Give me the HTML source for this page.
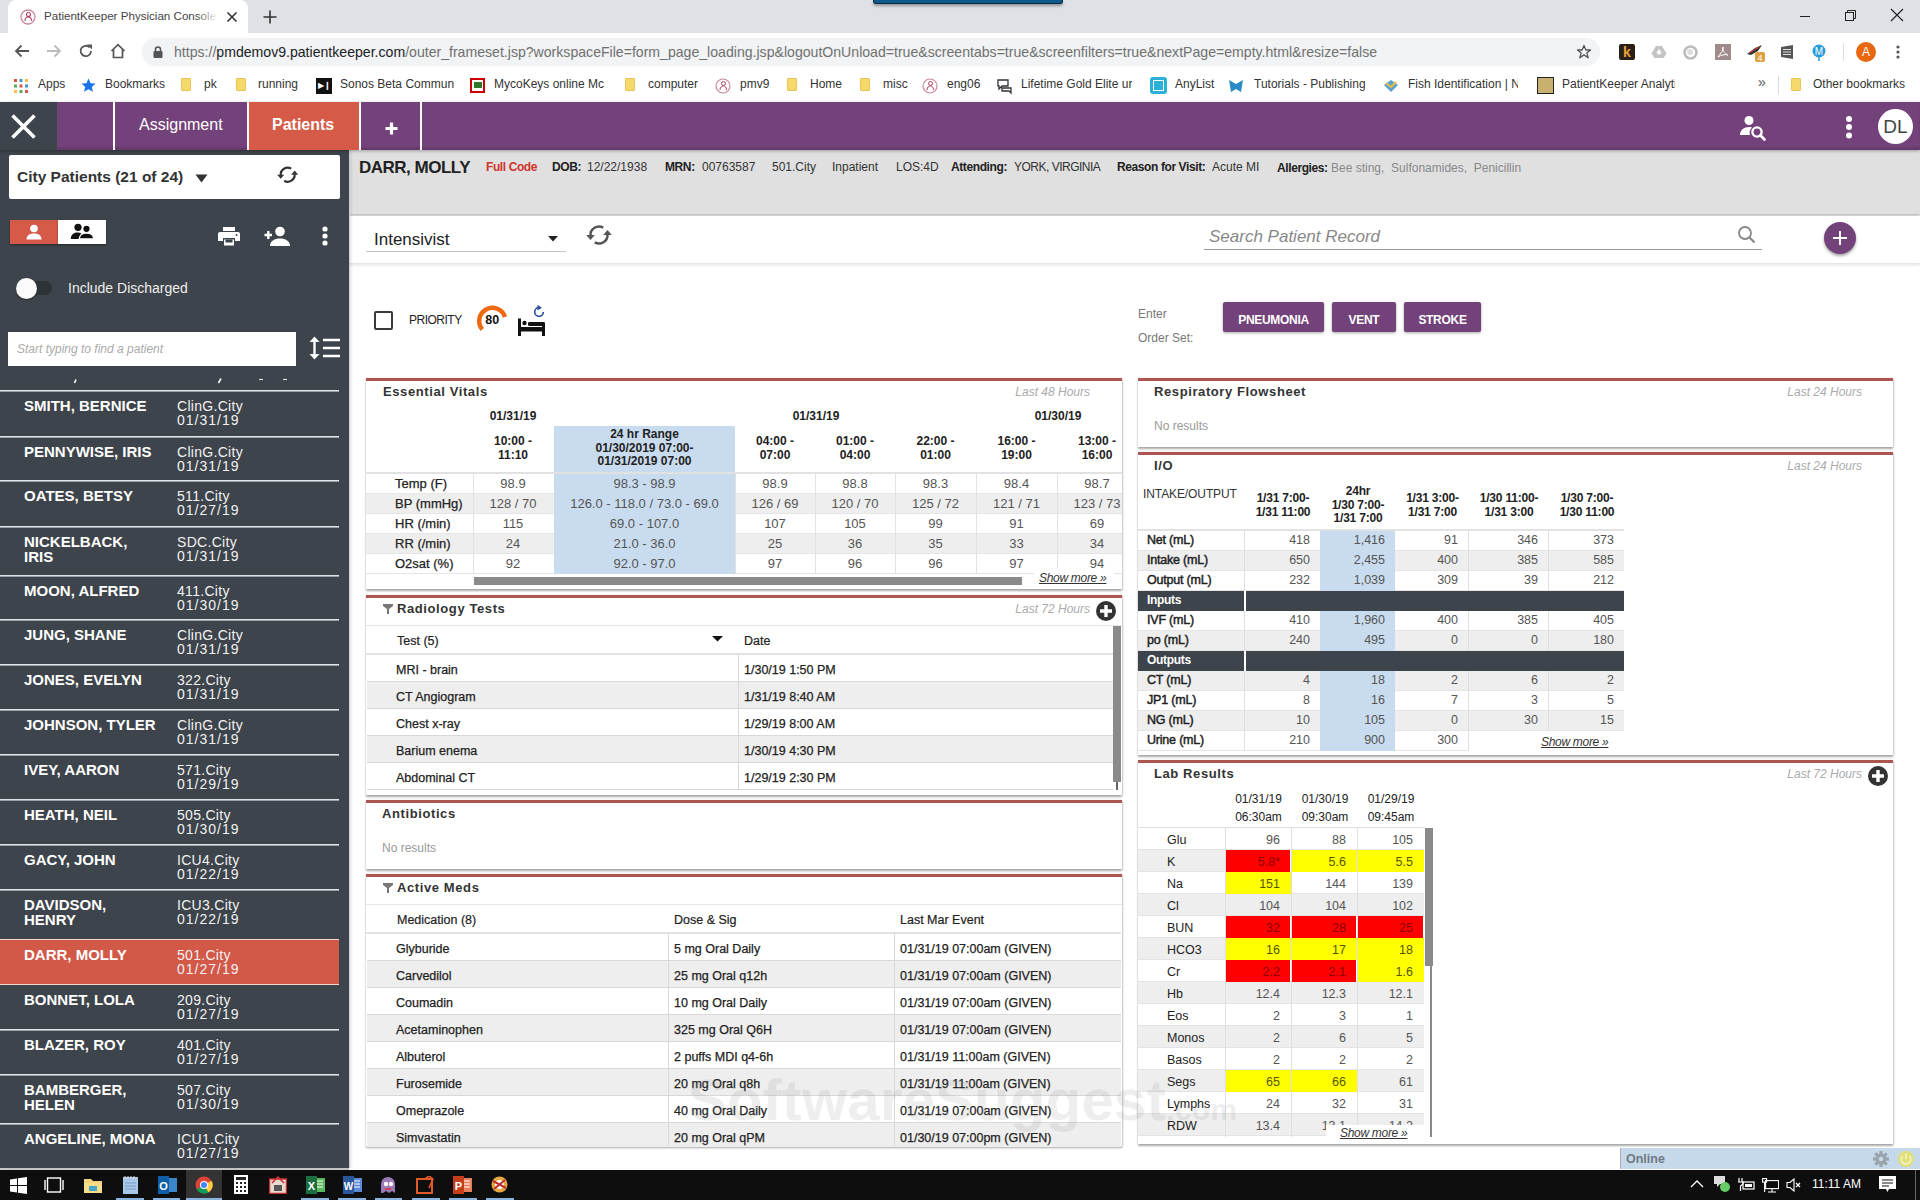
<!DOCTYPE html>
<html><head><meta charset="utf-8">
<style>
*{box-sizing:border-box;margin:0;padding:0}
html,body{width:1920px;height:1200px;overflow:hidden;background:#fff;font-family:"Liberation Sans",sans-serif;color:#222}
.a{position:absolute}
#tabbar{left:0;top:0;width:1920px;height:33px;background:#dee1e6}
#tab{left:8px;top:0;width:240px;height:33px;background:#fff;border-radius:8px 8px 0 0}
#addr{left:0;top:33px;width:1920px;height:35px;background:#fff}
#omni{left:142px;top:38px;width:1458px;height:28px;background:#f1f3f4;border-radius:14px}
#bm{left:0;top:68px;width:1920px;height:34px;background:#fff;font-size:12px;color:#333}
.bmt{top:9px;white-space:nowrap}
.fold{width:10px;height:13px;background:#f6d96b;border:1px solid #e5c55a;border-radius:1px;top:10px}
#hdr{left:0;top:102px;width:1920px;height:48px;background:#74427a;box-shadow:inset 0 -3px 2px rgba(0,0,0,.12),0 1px 3px rgba(0,0,0,.3);z-index:2}
#side{left:0;top:150px;width:349px;height:1018px;background:#3d444b;box-shadow:1px 0 0 #c9d0d6,3px 0 2px rgba(0,0,0,.08);z-index:1}
#phdr{left:349px;top:150px;width:1571px;height:64px;background:#e0e0e0;box-shadow:0 2px 2px rgba(0,0,0,.25)}
#tool{left:349px;top:216px;width:1571px;height:47px;background:#fff;box-shadow:0 2px 3px rgba(0,0,0,.12)}
#task{left:0;top:1168px;width:1920px;height:32px;background:#111214}
.nm{left:24px;font-size:15px;font-weight:bold;color:#fff;line-height:15px;white-space:nowrap}
.lc{left:177px;font-size:14px;color:#f2f2f2;line-height:14px;white-space:nowrap;letter-spacing:.3px}
.dt{letter-spacing:1px}
.sep{left:0;width:339px;height:2px;border-top:1px solid #e2e5e8;background:#9ca2a8}
.ht{top:160px;font-size:12px;color:#333;white-space:nowrap}
.b{font-weight:bold;letter-spacing:-0.4px;color:#222}
.obtn{top:302px;height:30px;padding-top:3px;background:#74427a;color:#fff;font-size:12px;font-weight:bold;text-align:center;line-height:30px;border-radius:2px;box-shadow:0 1px 3px rgba(0,0,0,.35);letter-spacing:-0.3px}
.pnl{background:#fff;border-top:3px solid #ad5651;box-shadow:0 2px 2px rgba(0,0,0,.33),1px 0 2px rgba(0,0,0,.12)}
.vl{font-size:13px;color:#222;line-height:19px;white-space:nowrap;-webkit-text-stroke:0.25px #222}
.vv{font-size:13px;color:#555;line-height:19px;text-align:center;white-space:nowrap}
</style></head><body>
<div id="tabbar" class="a">
 <div class="a" style="left:873px;top:0;width:190px;height:4px;background:#0d5b8c;border:1px solid #0a2a44;border-top:0;border-radius:0 0 3px 3px;box-shadow:0 2px 3px rgba(0,0,0,.35)"></div>
 <svg class="a" style="left:1798px;top:9px" width="14" height="14"><path d="M2 7.5H12" stroke="#222" stroke-width="1"/></svg>
 <svg class="a" style="left:1843px;top:8px" width="14" height="14"><rect x="2.5" y="4.5" width="8" height="8" fill="none" stroke="#222"/><path d="M4.5 4.5V2.5H12.5V10.5H10.5" fill="none" stroke="#222"/></svg>
 <svg class="a" style="left:1889px;top:7px" width="16" height="16"><path d="M2 2L14 14M14 2L2 14" stroke="#222" stroke-width="1.2"/></svg>
 <svg class="a" style="left:262px;top:9px" width="16" height="16"><path d="M8 1.5V14.5M1.5 8H14.5" stroke="#333" stroke-width="1.6"/></svg>
</div>
<div id="tab" class="a">
 <svg class="a" style="left:12px;top:9px" width="16" height="16"><circle cx="8" cy="8" r="7" fill="#fff" stroke="#c98a98" stroke-width="1.3"/><circle cx="8.5" cy="5.5" r="2" fill="none" stroke="#b04060" stroke-width="1.1"/><path d="M5 12c0-3 2-4 3.5-4s3 1 3 4" fill="none" stroke="#b04060" stroke-width="1.1"/></svg>
 <div class="a" style="left:36px;top:9px;font-size:11.6px;color:#444;white-space:nowrap;width:173px;overflow:hidden">PatientKeeper Physician Console</div>
 <div class="a" style="left:188px;top:6px;width:22px;height:20px;background:linear-gradient(90deg,rgba(255,255,255,0),#fff)"></div>
 <svg class="a" style="left:218px;top:11px" width="12" height="12"><path d="M1.5 1.5L10.5 10.5M10.5 1.5L1.5 10.5" stroke="#333" stroke-width="1.6"/></svg>
</div>
<div id="addr" class="a">
 <svg class="a" style="left:13px;top:10px" width="18" height="16"><path d="M16 8H3M8.5 2.5L3 8L8.5 13.5" fill="none" stroke="#555" stroke-width="1.8"/></svg>
 <svg class="a" style="left:45px;top:10px" width="18" height="16"><path d="M2 8H15M9.5 2.5L15 8L9.5 13.5" fill="none" stroke="#bbb" stroke-width="1.8"/></svg>
 <svg class="a" style="left:78px;top:10px" width="16" height="16"><path d="M13 8A5.2 5.2 0 1 1 11.5 4.3" fill="none" stroke="#555" stroke-width="1.8"/><path d="M9 1.5H14V6.5Z" fill="#555"/></svg>
 <svg class="a" style="left:109px;top:9px" width="18" height="18"><path d="M2.5 9L9 2.7L15.5 9M4.5 7.5V15.5H13.5V7.5" fill="none" stroke="#555" stroke-width="1.7"/></svg>
</div>
<div id="omni" class="a">
 <svg class="a" style="left:10px;top:7px" width="12" height="14"><rect x="1.5" y="6" width="9" height="7" rx="1" fill="#555"/><path d="M3.5 6V4.5a2.5 2.5 0 0 1 5 0V6" fill="none" stroke="#555" stroke-width="1.6"/></svg>
 <div class="a" style="left:32px;top:6px;font-size:14.1px;color:#707070;white-space:nowrap;letter-spacing:0">https://<span style="color:#202124">pmdemov9.patientkeeper.com</span>/outer_frameset.jsp?workspaceFile=form_page_loading.jsp&amp;logoutOnUnload=true&amp;screentabs=true&amp;screenfilters=true&amp;nextPage=empty.html&amp;resize=false</div>
 <svg class="a" style="left:1434px;top:6px" width="16" height="16"><path d="M8 1.5L9.9 6H14.5L10.8 8.9L12.2 13.8L8 10.9L3.8 13.8L5.2 8.9L1.5 6H6.1Z" fill="none" stroke="#555" stroke-width="1.3" stroke-linejoin="round"/></svg>
</div>
<div class="a" style="left:1619px;top:44px;width:16px;height:16px;background:#2b2018;border-radius:2px;color:#e8a23a;font:bold 14px 'Liberation Sans';text-align:center;line-height:16px">k</div>
<svg class="a" style="left:1651px;top:45px" width="16" height="14"><path d="M5 1H11L15.5 8.5L12.5 13H3.5L0.5 8.5Z" fill="#c4c4c4"/><path d="M5.5 7.5L8 4L10.5 7.5L9 9.5H7Z" fill="#fff"/></svg>
<svg class="a" style="left:1683px;top:45px" width="15" height="15"><circle cx="7.5" cy="7.5" r="6" fill="none" stroke="#bbb" stroke-width="2.5"/><circle cx="7" cy="7" r="3" fill="#ddd"/></svg>
<div class="a" style="left:1715px;top:44px;width:16px;height:16px;background:#a08b8b"><svg width="16" height="16"><path d="M3 13C6 9 9 5 8 3C7 5 9 10 13 11C10 10 6 11 3 13Z" fill="none" stroke="#fff" stroke-width="1"/></svg></div>
<svg class="a" style="left:1745px;top:42px" width="22" height="22"><path d="M2 12L10 6L17 3L13 9L6 13Z" fill="#333"/><path d="M4 11L14 5" stroke="#e33" stroke-width="1"/><rect x="10" y="10" width="10" height="10" rx="2" fill="#e0a040"/><text x="15" y="18.5" font-size="9" fill="#fff" text-anchor="middle" font-family="Liberation Sans">4</text></svg>
<svg class="a" style="left:1779px;top:44px" width="16" height="16"><path d="M2 3L14 1V15L2 13Z" fill="#555"/><path d="M4 5.5H12M4 8H12M4 10.5H12" stroke="#ddd" stroke-width="1.2"/></svg>
<svg class="a" style="left:1811px;top:44px" width="16" height="18"><circle cx="8" cy="7" r="6.5" fill="#2a9ad8"/><text x="8" y="11" font-size="10" fill="#fff" text-anchor="middle" font-family="Liberation Sans">M</text><path d="M8 13V17" stroke="#2a9ad8" stroke-width="1.5"/></svg>
<div class="a" style="left:1843px;top:43px;width:1px;height:18px;background:#ddd"></div>
<div class="a" style="left:1856px;top:42px;width:20px;height:20px;border-radius:50%;background:#e8670f;color:#fff;font-size:12px;text-align:center;line-height:20px">A</div>
<svg class="a" style="left:1894px;top:44px" width="8" height="16"><circle cx="4" cy="3" r="1.6" fill="#555"/><circle cx="4" cy="8" r="1.6" fill="#555"/><circle cx="4" cy="13" r="1.6" fill="#555"/></svg>
<div id="bm" class="a">
 <svg class="a" style="left:14px;top:11px" width="14" height="14"><g><rect x="0" y="0" width="3" height="3" fill="#d54"/><rect x="5.5" y="0" width="3" height="3" fill="#49c"/><rect x="11" y="0" width="3" height="3" fill="#fb4"/><rect x="0" y="5.5" width="3" height="3" fill="#5a5"/><rect x="5.5" y="5.5" width="3" height="3" fill="#d54"/><rect x="11" y="5.5" width="3" height="3" fill="#49c"/><rect x="0" y="11" width="3" height="3" fill="#fb4"/><rect x="5.5" y="11" width="3" height="3" fill="#5a5"/><rect x="11" y="11" width="3" height="3" fill="#d54"/></g></svg>
 <div class="a bmt" style="left:38px">Apps</div>
 <svg class="a" style="left:81px;top:10px" width="15" height="15"><path d="M7.5 0.5L9.6 5.2L14.5 5.6L10.8 8.9L12 13.8L7.5 11.2L3 13.8L4.2 8.9L0.5 5.6L5.4 5.2Z" fill="#1a73e8"/></svg>
 <div class="a bmt" style="left:105px">Bookmarks</div>
 <div class="a fold" style="left:181px"></div><div class="a bmt" style="left:204px">pk</div>
 <div class="a fold" style="left:236px"></div><div class="a bmt" style="left:258px">running</div>
 <div class="a" style="left:316px;top:10px;width:16px;height:16px;background:#111;color:#fff;font-size:8px;line-height:16px;text-align:center">&#9654;&#10073;</div>
 <div class="a bmt" style="left:340px;width:114px;overflow:hidden">Sonos Beta Communi</div>
 <div class="a" style="left:470px;top:10px;width:15px;height:15px;border:2px solid #c00;background:#fff"><div style="width:8px;height:6px;background:#2a7a2a;margin:2px"></div></div>
 <div class="a bmt" style="left:494px;width:111px;overflow:hidden">MycoKeys online Mc</div>
 <div class="a fold" style="left:625px"></div><div class="a bmt" style="left:648px">computer</div>
 <svg class="a" style="left:715px;top:10px" width="16" height="16"><circle cx="8" cy="8" r="7" fill="#fff" stroke="#c98a98" stroke-width="1.2"/><circle cx="8.5" cy="5.5" r="2" fill="none" stroke="#b04060"/><path d="M5 12c0-3 2-4 3.5-4s3 1 3 4" fill="none" stroke="#b04060"/></svg>
 <div class="a bmt" style="left:740px">pmv9</div>
 <div class="a fold" style="left:787px"></div><div class="a bmt" style="left:810px">Home</div>
 <div class="a fold" style="left:860px"></div><div class="a bmt" style="left:883px">misc</div>
 <svg class="a" style="left:922px;top:10px" width="16" height="16"><circle cx="8" cy="8" r="7" fill="#fff" stroke="#c98a98" stroke-width="1.2"/><circle cx="8.5" cy="5.5" r="2" fill="none" stroke="#b04060"/><path d="M5 12c0-3 2-4 3.5-4s3 1 3 4" fill="none" stroke="#b04060"/></svg>
 <div class="a bmt" style="left:947px">eng06</div>
 <svg class="a" style="left:996px;top:9px" width="18" height="18"><path d="M2 3H12V9H6L3 12V9H2Z M6 11H15V16L13 14H6Z" fill="none" stroke="#333" stroke-width="1.3"/></svg>
 <div class="a bmt" style="left:1021px;width:111px;overflow:hidden">Lifetime Gold Elite ur</div>
 <div class="a" style="left:1150px;top:9px;width:17px;height:17px;background:#2bb0d8;border-radius:3px"><div style="margin:3px;width:11px;height:11px;border:1.5px solid #fff"></div></div>
 <div class="a bmt" style="left:1175px">AnyList</div>
 <svg class="a" style="left:1228px;top:10px" width="16" height="16"><path d="M1 2L8 6L15 2L13 14L8 11L3 14Z" fill="#2a8ac8"/></svg>
 <div class="a bmt" style="left:1254px;width:111px;overflow:hidden">Tutorials - Publishing</div>
 <svg class="a" style="left:1382px;top:9px" width="18" height="18"><path d="M2 8L9 3L16 8L9 15Z" fill="#5ba0d0"/><path d="M4 6L9 10L14 5" stroke="#e8c040" stroke-width="2" fill="none"/></svg>
 <div class="a bmt" style="left:1408px;width:110px;overflow:hidden">Fish Identification | N</div>
 <div class="a" style="left:1537px;top:9px;width:17px;height:17px;border:1px solid #222;background:#c8b070"></div>
 <div class="a bmt" style="left:1562px;width:113px;overflow:hidden">PatientKeeper Analyti</div>
 <div class="a bmt" style="left:1758px;font-size:14px;top:6px;color:#555">&#187;</div>
 <div class="a" style="left:1778px;top:8px;width:1px;height:18px;background:#ddd"></div>
 <div class="a fold" style="left:1791px"></div><div class="a bmt" style="left:1813px">Other bookmarks</div>
</div>
<div id="hdr" class="a">
 <div class="a" style="left:0;top:0;width:57px;height:48px;background:#3d444b"></div>
 <svg class="a" style="left:10px;top:11px" width="27" height="27"><path d="M2.5 2.5L24.5 24.5M24.5 2.5L2.5 24.5" stroke="#fff" stroke-width="3.6"/></svg>
 <div class="a" style="left:113px;top:0;width:2px;height:48px;background:#fff"></div>
 <div class="a" style="left:139px;top:14px;font-size:16px;color:#fff">Assignment</div>
 <div class="a" style="left:247px;top:0;width:2px;height:48px;background:#fff"></div>
 <div class="a" style="left:249px;top:0;width:110px;height:48px;background:#d65a48"></div>
 <div class="a" style="left:272px;top:14px;font-size:16px;font-weight:bold;color:#fff">Patients</div>
 <div class="a" style="left:359px;top:0;width:2px;height:48px;background:#fff"></div>
 <svg class="a" style="left:384px;top:19px" width="15" height="15"><path d="M7.5 1.5V13.5M1.5 7.5H13.5" stroke="#fff" stroke-width="3.2"/></svg>
 <div class="a" style="left:420px;top:0;width:2px;height:48px;background:#fff"></div>
 <svg class="a" style="left:1738px;top:11px" width="30" height="30"><circle cx="11" cy="7.5" r="4.5" fill="#fff"/><path d="M2 22c0-5 4-8 9-8c1 0 2 .1 3 .4A7 7 0 0 0 12 22Z" fill="#fff"/><circle cx="19" cy="19" r="4.6" fill="none" stroke="#fff" stroke-width="2.4"/><path d="M22.3 22.3L26.5 26.5" stroke="#fff" stroke-width="2.8" stroke-linecap="round"/></svg>
 <svg class="a" style="left:1842px;top:12px" width="14" height="28"><circle cx="7" cy="5" r="3" fill="#fff"/><circle cx="7" cy="13" r="3" fill="#fff"/><circle cx="7" cy="21.5" r="3" fill="#fff"/></svg>
 <div class="a" style="left:1878px;top:7px;width:35px;height:35px;border-radius:50%;background:#fff;color:#444;font-size:19px;text-align:center;line-height:35px">DL</div>
</div>
<div id="side" class="a">
 <div class="a" style="left:9px;top:5px;width:331px;height:44px;background:#fff;border-radius:2px"></div>
 <div class="a" style="left:17px;top:18px;font-size:15.5px;font-weight:bold;color:#333;white-space:nowrap">City Patients (21 of 24)</div>
 <svg class="a" style="left:195px;top:24px" width="13" height="9"><path d="M0.5 0.5H12.5L6.5 8.5Z" fill="#333"/></svg>
 <svg class="a" style="left:277px;top:14px" width="21.4" height="21.4" viewBox="-1 -1 26 26"><path d="M16.25 4.64A8.5 8.5 0 0 0 3.5 12.5M7.75 19.36A8.5 8.5 0 0 0 20.5 11.5" fill="none" stroke="#333" stroke-width="2.7"/><path d="M-0.8 12H7.8L3.5 17Z M16.2 12H24.8L20.5 7Z" fill="#333"/></svg>
 <div class="a" style="left:10px;top:70px;width:48px;height:24px;background:#d65a48;box-shadow:0 1px 2px rgba(0,0,0,.4)"></div>
 <div class="a" style="left:58px;top:70px;width:48px;height:24px;background:#fff;box-shadow:0 1px 2px rgba(0,0,0,.4)"></div>
 <svg class="a" style="left:25px;top:74px" width="18" height="16"><circle cx="9" cy="4.5" r="3.8" fill="#fff"/><path d="M1.5 15.5c0-4 3-6 7.5-6s7.5 2 7.5 6Z" fill="#fff"/></svg>
 <svg class="a" style="left:70px;top:73px" width="25" height="17"><circle cx="8" cy="4.3" r="3.6" fill="#111"/><circle cx="16.5" cy="5.8" r="3.1" fill="#111"/><path d="M0.8 16c0-4 2.5-6.5 6.5-6.5c1.5 0 3 .4 4 1L8.5 16Z" fill="#111"/><path d="M9.3 16c0-3.6 2.8-6 7.2-6s7.2 2.4 7.2 6Z" fill="#111" stroke="#fff" stroke-width="1.3"/></svg>
 <svg class="a" style="left:218px;top:77px" width="22" height="19"><rect x="5" y="0" width="12" height="4" fill="#fff"/><path d="M0 7a2 2 0 0 1 2-2H20a2 2 0 0 1 2 2V14H17V11H5V14H0Z" fill="#fff"/><rect x="6" y="12.5" width="10" height="6" fill="#fff"/><rect x="7.5" y="12.5" width="7" height="3" fill="#3d444b"/><circle cx="18.5" cy="8" r="1" fill="#3d444b"/></svg>
 <svg class="a" style="left:264px;top:76px" width="27" height="20"><path d="M0.5 9H8M4.3 5V13" stroke="#fff" stroke-width="2.4"/><circle cx="16" cy="5.5" r="4.8" fill="#fff"/><path d="M6 20c0-5 4.5-7.5 10-7.5s10 2.5 10 7.5Z" fill="#fff"/></svg>
 <svg class="a" style="left:319px;top:76px" width="12" height="20"><circle cx="6" cy="3" r="2.6" fill="#fff"/><circle cx="6" cy="10" r="2.6" fill="#fff"/><circle cx="6" cy="17" r="2.6" fill="#fff"/></svg>
 <div class="a" style="left:16px;top:131px;width:36px;height:14px;border-radius:7px;background:#2e3338"></div>
 <div class="a" style="left:16px;top:128px;width:21px;height:21px;border-radius:50%;background:#fafafa;box-shadow:0 1px 2px rgba(0,0,0,.4)"></div>
 <div class="a" style="left:68px;top:130px;font-size:14px;color:#eee">Include Discharged</div>
 <div class="a" style="left:8px;top:182px;width:288px;height:34px;background:#fff"></div>
 <div class="a" style="left:17px;top:192px;font-size:12px;font-style:italic;color:#aaa">Start typing to find a patient</div>
 <svg class="a" style="left:309px;top:186px" width="32" height="24"><path d="M5.5 2V22" stroke="#fff" stroke-width="2.4"/><path d="M0.5 6L5.5 0.5L10.5 6Z M0.5 18L5.5 23.5L10.5 18Z" fill="#fff"/><path d="M14 4H31M14 12H31M14 20H31" stroke="#fff" stroke-width="2.6"/></svg>
 <div class="a sep" style="top:240px"></div>
 <div class="a nm" style="margin-top:-1px;top:249px">SMITH, BERNICE</div><div class="a lc" style="margin-top:-1px;top:250px">ClinG.City<br><span class="dt">01/31/19</span></div>
 <div class="a sep" style="top:286px"></div>
 <div class="a nm" style="margin-top:-1px;top:295px">PENNYWISE, IRIS</div><div class="a lc" style="margin-top:-1px;top:296px">ClinG.City<br><span class="dt">01/31/19</span></div>
 <div class="a sep" style="top:330px"></div>
 <div class="a nm" style="margin-top:-1px;top:339px">OATES, BETSY</div><div class="a lc" style="margin-top:-1px;top:340px">511.City<br><span class="dt">01/27/19</span></div>
 <div class="a sep" style="top:376px"></div>
 <div class="a nm" style="margin-top:-1px;top:385px">NICKELBACK,<br>IRIS</div><div class="a lc" style="margin-top:-1px;top:386px">SDC.City<br><span class="dt">01/31/19</span></div>
 <div class="a sep" style="top:425px"></div>
 <div class="a nm" style="margin-top:-1px;top:434px">MOON, ALFRED</div><div class="a lc" style="margin-top:-1px;top:435px">411.City<br><span class="dt">01/30/19</span></div>
 <div class="a sep" style="top:469px"></div>
 <div class="a nm" style="margin-top:-1px;top:478px">JUNG, SHANE</div><div class="a lc" style="margin-top:-1px;top:479px">ClinG.City<br><span class="dt">01/31/19</span></div>
 <div class="a sep" style="top:514px"></div>
 <div class="a nm" style="margin-top:-1px;top:523px">JONES, EVELYN</div><div class="a lc" style="margin-top:-1px;top:524px">322.City<br><span class="dt">01/31/19</span></div>
 <div class="a sep" style="top:559px"></div>
 <div class="a nm" style="margin-top:-1px;top:568px">JOHNSON, TYLER</div><div class="a lc" style="margin-top:-1px;top:569px">ClinG.City<br><span class="dt">01/31/19</span></div>
 <div class="a sep" style="top:604px"></div>
 <div class="a nm" style="margin-top:-1px;top:613px">IVEY, AARON</div><div class="a lc" style="margin-top:-1px;top:614px">571.City<br><span class="dt">01/29/19</span></div>
 <div class="a sep" style="top:649px"></div>
 <div class="a nm" style="margin-top:-1px;top:658px">HEATH, NEIL</div><div class="a lc" style="margin-top:-1px;top:659px">505.City<br><span class="dt">01/30/19</span></div>
 <div class="a sep" style="top:694px"></div>
 <div class="a nm" style="margin-top:-1px;top:703px">GACY, JOHN</div><div class="a lc" style="margin-top:-1px;top:704px">ICU4.City<br><span class="dt">01/22/19</span></div>
 <div class="a sep" style="top:739px"></div>
 <div class="a nm" style="margin-top:-1px;top:748px">DAVIDSON,<br>HENRY</div><div class="a lc" style="margin-top:-1px;top:749px">ICU3.City<br><span class="dt">01/22/19</span></div>
 <div class="a" style="left:0;top:789px;width:339px;height:46px;background:#d25848;border-top:1px solid #f3d6d0;border-bottom:1px solid #f3d6d0"></div>
 <div class="a nm" style="margin-top:-1px;top:798px">DARR, MOLLY</div><div class="a lc" style="margin-top:-1px;top:799px">501.City<br><span class="dt">01/27/19</span></div>
 <div class="a nm" style="margin-top:-1px;top:843px">BONNET, LOLA</div><div class="a lc" style="margin-top:-1px;top:844px">209.City<br><span class="dt">01/27/19</span></div>
 <div class="a sep" style="top:879px"></div>
 <div class="a nm" style="margin-top:-1px;top:888px">BLAZER, ROY</div><div class="a lc" style="margin-top:-1px;top:889px">401.City<br><span class="dt">01/27/19</span></div>
 <div class="a sep" style="top:924px"></div>
 <div class="a nm" style="margin-top:-1px;top:933px">BAMBERGER,<br>HELEN</div><div class="a lc" style="margin-top:-1px;top:934px">507.City<br><span class="dt">01/30/19</span></div>
 <div class="a sep" style="top:973px"></div>
 <div class="a nm" style="margin-top:-1px;top:982px">ANGELINE, MONA</div><div class="a lc" style="margin-top:-1px;top:983px">ICU1.City<br><span class="dt">01/27/19</span></div>
</div>
<div id="phdr" class="a"></div>
<div class="a" style="left:359px;top:158px;font-size:17px;font-weight:bold;color:#222;letter-spacing:-0.5px;white-space:nowrap">DARR, MOLLY</div>
<div class="a ht" style="left:486px;color:#d0342c;font-weight:bold;letter-spacing:-0.4px">Full Code</div>
<div class="a ht b" style="left:552px">DOB:</div><div class="a ht" style="left:587px">12/22/1938</div>
<div class="a ht b" style="left:665px">MRN:</div><div class="a ht" style="left:702px">00763587</div>
<div class="a ht" style="left:772px">501.City</div>
<div class="a ht" style="left:832px">Inpatient</div>
<div class="a ht" style="left:896px">LOS:4D</div>
<div class="a ht b" style="left:951px">Attending:</div><div class="a ht" style="left:1014px;letter-spacing:-0.5px">YORK, VIRGINIA</div>
<div class="a ht b" style="left:1117px">Reason for Visit:</div><div class="a ht" style="left:1212px">Acute MI</div>
<div class="a ht b" style="left:1277px;top:161px">Allergies:</div><div class="a ht" style="left:1331px;top:161px;color:#888">Bee sting,&nbsp; Sulfonamides,&nbsp; Penicillin</div>
<div id="tool" class="a"></div>
<div class="a" style="left:374px;top:230px;font-size:17px;color:#222">Intensivist</div>
<div class="a" style="left:366px;top:251px;width:200px;height:1px;background:#c4c4c4"></div>
<svg class="a" style="left:548px;top:236px" width="11" height="6"><path d="M0 0H10L5 5.5Z" fill="#222"/></svg>
<svg class="a" style="left:586px;top:222px" width="26" height="26" viewBox="-1 -1 26 26"><path d="M16.25 4.64A8.5 8.5 0 0 0 3.5 12.5M7.75 19.36A8.5 8.5 0 0 0 20.5 11.5" fill="none" stroke="#555" stroke-width="2.5"/><path d="M-0.8 12H7.8L3.5 17Z M16.2 12H24.8L20.5 7Z" fill="#555"/></svg>
<div class="a" style="left:1209px;top:227px;font-size:17px;font-style:italic;color:#888">Search Patient Record</div>
<div class="a" style="left:1204px;top:249px;width:558px;height:1px;background:#999"></div>
<svg class="a" style="left:1737px;top:225px" width="20" height="20"><circle cx="8" cy="8" r="6" fill="none" stroke="#888" stroke-width="1.8"/><path d="M12.3 12.3L17.5 17.5" stroke="#888" stroke-width="2.2"/></svg>
<div class="a" style="left:1824px;top:222px;width:32px;height:32px;border-radius:50%;background:#74427a;box-shadow:0 2px 3px rgba(0,0,0,.35)"></div>
<svg class="a" style="left:1830px;top:228px" width="20" height="20"><path d="M10 3V17M3 10H17" stroke="#fff" stroke-width="2"/></svg>
<div class="a" style="left:374px;top:311px;width:19px;height:19px;border:2px solid #3a3a3a;border-radius:2px"></div>
<div class="a" style="left:409px;top:313px;font-size:12px;color:#222;letter-spacing:-0.5px">PRIORITY</div>
<svg class="a" style="left:475px;top:303px" width="36" height="34"><path d="M7.3 26.5A13.2 13.2 0 1 1 30 14" fill="none" stroke="#ee6a12" stroke-width="4.5"/><text x="17.3" y="21.3" font-size="12.5" font-weight="bold" fill="#111" text-anchor="middle" font-family="Liberation Sans">80</text></svg>
<svg class="a" style="left:516px;top:303px" width="32" height="34"><path d="M27.3 9A4.3 4.3 0 1 1 22.5 4.7" fill="none" stroke="#2b4f9c" stroke-width="1.7"/><path d="M21.5 1.8L26 4.7L21.5 7.6Z" fill="#2b4f9c"/><rect x="2" y="15.5" width="3" height="17.5" fill="#111"/><rect x="26" y="22" width="3" height="11" fill="#111"/><rect x="2" y="24" width="27" height="4.5" fill="#111"/><circle cx="8.5" cy="20" r="2.2" fill="#111"/><rect x="12" y="19" width="17" height="4" rx="1.2" fill="#111"/></svg>
<div class="a" style="left:1138px;top:307px;font-size:12px;color:#777">Enter</div>
<div class="a" style="left:1138px;top:331px;font-size:12px;color:#777">Order Set:</div>
<div class="a obtn" style="left:1223px;width:101px">PNEUMONIA</div>
<div class="a obtn" style="left:1332px;width:64px">VENT</div>
<div class="a obtn" style="left:1404px;width:77px">STROKE</div>

<svg class="a" style="left:70px;top:376px;z-index:3" width="230" height="10"><path d="M6 3.5L4.5 7" stroke="#fff" stroke-width="1.6"/><path d="M151 2.5L148.5 7" stroke="#fff" stroke-width="1.6"/><path d="M189 3.5H193" stroke="#ddd" stroke-width="1.2"/><path d="M213 3.5H217" stroke="#ddd" stroke-width="1.2"/></svg>
<!--PANELS-->
<div class="a pnl" style="left:366px;top:378px;width:756px;height:211px"></div>
<div class="a" style="left:383px;top:384px;font-size:13px;font-weight:bold;color:#333;letter-spacing:0.6px;white-space:nowrap">Essential Vitals</div>
<div class="a" style="left:970px;top:385px;width:120px;text-align:right;font-size:12px;font-style:italic;color:#aaa;white-space:nowrap">Last 48 Hours</div>
<div class="a" style="left:473.0px;top:410px;width:80px;text-align:center;font-size:12px;font-weight:bold;color:#222;line-height:13.6px;white-space:nowrap">01/31/19</div>
<div class="a" style="left:776.0px;top:410px;width:80px;text-align:center;font-size:12px;font-weight:bold;color:#222;line-height:13.6px;white-space:nowrap">01/31/19</div>
<div class="a" style="left:1018.0px;top:410px;width:80px;text-align:center;font-size:12px;font-weight:bold;color:#222;line-height:13.6px;white-space:nowrap">01/30/19</div>
<div class="a" style="left:554px;top:426px;width:181px;height:46px;background:#c9dcef;"></div>
<div class="a" style="left:554.0px;top:428px;width:181px;text-align:center;font-size:12px;font-weight:bold;color:#222;line-height:13.6px;white-space:nowrap">24 hr Range<br>01/30/2019 07:00-<br>01/31/2019 07:00</div>
<div class="a" style="left:473.0px;top:435px;width:80px;text-align:center;font-size:12px;font-weight:bold;color:#222;line-height:13.6px;white-space:nowrap">10:00 -<br>11:10</div>
<div class="a" style="left:735.0px;top:435px;width:80px;text-align:center;font-size:12px;font-weight:bold;color:#222;line-height:13.6px;white-space:nowrap">04:00 -<br>07:00</div>
<div class="a" style="left:815.0px;top:435px;width:80px;text-align:center;font-size:12px;font-weight:bold;color:#222;line-height:13.6px;white-space:nowrap">01:00 -<br>04:00</div>
<div class="a" style="left:895.5px;top:435px;width:80px;text-align:center;font-size:12px;font-weight:bold;color:#222;line-height:13.6px;white-space:nowrap">22:00 -<br>01:00</div>
<div class="a" style="left:976.5px;top:435px;width:80px;text-align:center;font-size:12px;font-weight:bold;color:#222;line-height:13.6px;white-space:nowrap">16:00 -<br>19:00</div>
<div class="a" style="left:1057.0px;top:435px;width:80px;text-align:center;font-size:12px;font-weight:bold;color:#222;line-height:13.6px;white-space:nowrap">13:00 -<br>16:00</div>
<div class="a" style="left:366px;top:472px;width:756px;height:2px;background:#e2e2e2;"></div>
<div class="a" style="left:366px;top:474px;width:756px;height:100px;overflow:hidden">
<div class="a" style="left:0;top:0px;width:756px;height:20px;background:#fff;border-bottom:1px solid #e6e6e6"></div>
<div class="a vl" style="left:29px;top:0px">Temp (F)</div>
<div class="a vv" style="left:107px;top:0px;width:80px">98.9</div>
<div class="a" style="left:188px;top:0px;width:181px;height:20px;background:#c9dcef"></div>
<div class="a vv" style="left:188px;top:0px;width:181px">98.3 - 98.9</div>
<div class="a vv" style="left:369px;top:0px;width:80px">98.9</div>
<div class="a vv" style="left:449px;top:0px;width:80px">98.8</div>
<div class="a vv" style="left:529px;top:0px;width:81px">98.3</div>
<div class="a vv" style="left:610px;top:0px;width:81px">98.4</div>
<div class="a vv" style="left:691px;top:0px;width:80px">98.7</div>
<div class="a" style="left:0;top:20px;width:756px;height:20px;background:#eeeeee;border-bottom:1px solid #e6e6e6"></div>
<div class="a vl" style="left:29px;top:20px">BP (mmHg)</div>
<div class="a vv" style="left:107px;top:20px;width:80px">128 / 70</div>
<div class="a" style="left:188px;top:20px;width:181px;height:20px;background:#c9dcef"></div>
<div class="a vv" style="left:188px;top:20px;width:181px">126.0 - 118.0 / 73.0 - 69.0</div>
<div class="a vv" style="left:369px;top:20px;width:80px">126 / 69</div>
<div class="a vv" style="left:449px;top:20px;width:80px">120 / 70</div>
<div class="a vv" style="left:529px;top:20px;width:81px">125 / 72</div>
<div class="a vv" style="left:610px;top:20px;width:81px">121 / 71</div>
<div class="a vv" style="left:691px;top:20px;width:80px">123 / 73</div>
<div class="a" style="left:0;top:40px;width:756px;height:20px;background:#fff;border-bottom:1px solid #e6e6e6"></div>
<div class="a vl" style="left:29px;top:40px">HR (/min)</div>
<div class="a vv" style="left:107px;top:40px;width:80px">115</div>
<div class="a" style="left:188px;top:40px;width:181px;height:20px;background:#c9dcef"></div>
<div class="a vv" style="left:188px;top:40px;width:181px">69.0 - 107.0</div>
<div class="a vv" style="left:369px;top:40px;width:80px">107</div>
<div class="a vv" style="left:449px;top:40px;width:80px">105</div>
<div class="a vv" style="left:529px;top:40px;width:81px">99</div>
<div class="a vv" style="left:610px;top:40px;width:81px">91</div>
<div class="a vv" style="left:691px;top:40px;width:80px">69</div>
<div class="a" style="left:0;top:60px;width:756px;height:20px;background:#eeeeee;border-bottom:1px solid #e6e6e6"></div>
<div class="a vl" style="left:29px;top:60px">RR (/min)</div>
<div class="a vv" style="left:107px;top:60px;width:80px">24</div>
<div class="a" style="left:188px;top:60px;width:181px;height:20px;background:#c9dcef"></div>
<div class="a vv" style="left:188px;top:60px;width:181px">21.0 - 36.0</div>
<div class="a vv" style="left:369px;top:60px;width:80px">25</div>
<div class="a vv" style="left:449px;top:60px;width:80px">36</div>
<div class="a vv" style="left:529px;top:60px;width:81px">35</div>
<div class="a vv" style="left:610px;top:60px;width:81px">33</div>
<div class="a vv" style="left:691px;top:60px;width:80px">34</div>
<div class="a" style="left:0;top:80px;width:756px;height:20px;background:#fff;border-bottom:1px solid #e6e6e6"></div>
<div class="a vl" style="left:29px;top:80px">O2sat (%)</div>
<div class="a vv" style="left:107px;top:80px;width:80px">92</div>
<div class="a" style="left:188px;top:80px;width:181px;height:20px;background:#c9dcef"></div>
<div class="a vv" style="left:188px;top:80px;width:181px">92.0 - 97.0</div>
<div class="a vv" style="left:369px;top:80px;width:80px">97</div>
<div class="a vv" style="left:449px;top:80px;width:80px">96</div>
<div class="a vv" style="left:529px;top:80px;width:81px">96</div>
<div class="a vv" style="left:610px;top:80px;width:81px">97</div>
<div class="a vv" style="left:691px;top:80px;width:80px">94</div>
<div class="a" style="left:107px;top:0;width:1px;height:100px;background:#e2e2e2"></div>
<div class="a" style="left:369px;top:0;width:1px;height:100px;background:#e2e2e2"></div>
<div class="a" style="left:449px;top:0;width:1px;height:100px;background:#e2e2e2"></div>
<div class="a" style="left:529px;top:0;width:1px;height:100px;background:#e2e2e2"></div>
<div class="a" style="left:610px;top:0;width:1px;height:100px;background:#e2e2e2"></div>
<div class="a" style="left:691px;top:0;width:1px;height:100px;background:#e2e2e2"></div>
</div>
<div class="a" style="left:474px;top:577px;width:548px;height:8px;background:#8a8a8a;"></div>
<div class="a" style="left:1034px;top:568px;width:80px;height:18px;background:#fff"></div>
<div class="a" style="left:1039px;top:571px;font-size:12px;font-style:italic;color:#333;text-decoration:underline;white-space:nowrap;letter-spacing:-0.3px">Show more &raquo;</div>
<div class="a pnl" style="left:366px;top:595px;width:756px;height:200px"></div>
<svg class="a" style="left:383px;top:604px" width="10" height="10"><path d="M0 0H10V2L6 5V10H4V5L0 2Z" fill="#777"/></svg>
<div class="a" style="left:397px;top:601px;font-size:13px;font-weight:bold;color:#333;letter-spacing:0.6px;white-space:nowrap">Radiology Tests</div>
<div class="a" style="left:970px;top:602px;width:120px;text-align:right;font-size:12px;font-style:italic;color:#aaa;white-space:nowrap">Last 72 Hours</div>
<svg class="a" style="left:1095px;top:600px" width="22" height="22"><circle cx="11" cy="11" r="10" fill="#333"/><path d="M11 5V17M5 11H17" stroke="#fff" stroke-width="3.4"/></svg>
<div class="a" style="left:366px;top:625px;width:756px;height:1px;background:#e6e6e6;"></div>
<div class="a" style="left:397px;top:634px;font-size:12.5px;color:#222;-webkit-text-stroke:0.2px #222">Test (5)</div>
<svg class="a" style="left:712px;top:636px" width="12" height="6"><path d="M0 0H11L5.5 5.5Z" fill="#111"/></svg>
<div class="a" style="left:744px;top:634px;font-size:12.5px;color:#222;-webkit-text-stroke:0.2px #222">Date</div>
<div class="a" style="left:366px;top:653px;width:747px;height:2px;background:#e2e2e2;"></div>
<div class="a" style="left:367px;top:655px;width:746px;height:27px;background:#fff;border-bottom:1px solid #d8d8d8"></div>
<div class="a" style="left:396px;top:657px;font-size:12.5px;color:#222;line-height:27px;white-space:nowrap;-webkit-text-stroke:0.25px #222">MRI - brain</div>
<div class="a" style="left:744px;top:657px;font-size:12.5px;color:#222;line-height:27px;white-space:nowrap;-webkit-text-stroke:0.25px #222">1/30/19 1:50 PM</div>
<div class="a" style="left:367px;top:682px;width:746px;height:27px;background:#eeeeee;border-bottom:1px solid #d8d8d8"></div>
<div class="a" style="left:396px;top:684px;font-size:12.5px;color:#222;line-height:27px;white-space:nowrap;-webkit-text-stroke:0.25px #222">CT Angiogram</div>
<div class="a" style="left:744px;top:684px;font-size:12.5px;color:#222;line-height:27px;white-space:nowrap;-webkit-text-stroke:0.25px #222">1/31/19 8:40 AM</div>
<div class="a" style="left:367px;top:709px;width:746px;height:27px;background:#fff;border-bottom:1px solid #d8d8d8"></div>
<div class="a" style="left:396px;top:711px;font-size:12.5px;color:#222;line-height:27px;white-space:nowrap;-webkit-text-stroke:0.25px #222">Chest x-ray</div>
<div class="a" style="left:744px;top:711px;font-size:12.5px;color:#222;line-height:27px;white-space:nowrap;-webkit-text-stroke:0.25px #222">1/29/19 8:00 AM</div>
<div class="a" style="left:367px;top:736px;width:746px;height:27px;background:#eeeeee;border-bottom:1px solid #d8d8d8"></div>
<div class="a" style="left:396px;top:738px;font-size:12.5px;color:#222;line-height:27px;white-space:nowrap;-webkit-text-stroke:0.25px #222">Barium enema</div>
<div class="a" style="left:744px;top:738px;font-size:12.5px;color:#222;line-height:27px;white-space:nowrap;-webkit-text-stroke:0.25px #222">1/30/19 4:30 PM</div>
<div class="a" style="left:367px;top:763px;width:746px;height:27px;background:#fff;border-bottom:1px solid #d8d8d8"></div>
<div class="a" style="left:396px;top:765px;font-size:12.5px;color:#222;line-height:27px;white-space:nowrap;-webkit-text-stroke:0.25px #222">Abdominal CT</div>
<div class="a" style="left:744px;top:765px;font-size:12.5px;color:#222;line-height:27px;white-space:nowrap;-webkit-text-stroke:0.25px #222">1/29/19 2:30 PM</div>
<div class="a" style="left:738px;top:655px;width:1px;height:135px;background:#d8d8d8;"></div>
<div class="a" style="left:1113px;top:626px;width:8px;height:156px;background:#8a8a8a;"></div>
<div class="a" style="left:1116px;top:782px;width:2px;height:8px;background:#666;"></div>
<div class="a pnl" style="left:366px;top:800px;width:756px;height:69px"></div>
<div class="a" style="left:382px;top:806px;font-size:13px;font-weight:bold;color:#333;letter-spacing:0.6px;white-space:nowrap">Antibiotics</div>
<div class="a" style="left:382px;top:841px;font-size:12px;color:#999">No results</div>
<div class="a pnl" style="left:366px;top:874px;width:756px;height:272px"></div>
<svg class="a" style="left:383px;top:883px" width="10" height="10"><path d="M0 0H10V2L6 5V10H4V5L0 2Z" fill="#777"/></svg>
<div class="a" style="left:397px;top:880px;font-size:13px;font-weight:bold;color:#333;letter-spacing:0.6px;white-space:nowrap">Active Meds</div>
<div class="a" style="left:366px;top:904px;width:756px;height:1px;background:#e6e6e6;"></div>
<div class="a" style="left:397px;top:913px;font-size:12.5px;color:#222;-webkit-text-stroke:0.2px #222">Medication (8)</div>
<div class="a" style="left:674px;top:913px;font-size:12.5px;color:#222;-webkit-text-stroke:0.2px #222">Dose &amp; Sig</div>
<div class="a" style="left:900px;top:913px;font-size:12.5px;color:#222;-webkit-text-stroke:0.2px #222">Last Mar Event</div>
<div class="a" style="left:366px;top:932px;width:755px;height:2px;background:#e2e2e2;"></div>
<div class="a" style="left:367px;top:934px;width:754px;height:27px;background:#fff;border-bottom:1px solid #d8d8d8"></div>
<div class="a" style="left:396px;top:936px;font-size:12.5px;color:#222;line-height:27px;white-space:nowrap;-webkit-text-stroke:0.25px #222">Glyburide</div>
<div class="a" style="left:674px;top:936px;font-size:12.5px;color:#222;line-height:27px;white-space:nowrap;-webkit-text-stroke:0.25px #222">5 mg Oral Daily</div>
<div class="a" style="left:900px;top:936px;font-size:12.5px;color:#222;line-height:27px;white-space:nowrap;-webkit-text-stroke:0.25px #222">01/31/19 07:00am (GIVEN)</div>
<div class="a" style="left:367px;top:961px;width:754px;height:27px;background:#eeeeee;border-bottom:1px solid #d8d8d8"></div>
<div class="a" style="left:396px;top:963px;font-size:12.5px;color:#222;line-height:27px;white-space:nowrap;-webkit-text-stroke:0.25px #222">Carvedilol</div>
<div class="a" style="left:674px;top:963px;font-size:12.5px;color:#222;line-height:27px;white-space:nowrap;-webkit-text-stroke:0.25px #222">25 mg Oral q12h</div>
<div class="a" style="left:900px;top:963px;font-size:12.5px;color:#222;line-height:27px;white-space:nowrap;-webkit-text-stroke:0.25px #222">01/31/19 07:00am (GIVEN)</div>
<div class="a" style="left:367px;top:988px;width:754px;height:27px;background:#fff;border-bottom:1px solid #d8d8d8"></div>
<div class="a" style="left:396px;top:990px;font-size:12.5px;color:#222;line-height:27px;white-space:nowrap;-webkit-text-stroke:0.25px #222">Coumadin</div>
<div class="a" style="left:674px;top:990px;font-size:12.5px;color:#222;line-height:27px;white-space:nowrap;-webkit-text-stroke:0.25px #222">10 mg Oral Daily</div>
<div class="a" style="left:900px;top:990px;font-size:12.5px;color:#222;line-height:27px;white-space:nowrap;-webkit-text-stroke:0.25px #222">01/31/19 07:00am (GIVEN)</div>
<div class="a" style="left:367px;top:1015px;width:754px;height:27px;background:#eeeeee;border-bottom:1px solid #d8d8d8"></div>
<div class="a" style="left:396px;top:1017px;font-size:12.5px;color:#222;line-height:27px;white-space:nowrap;-webkit-text-stroke:0.25px #222">Acetaminophen</div>
<div class="a" style="left:674px;top:1017px;font-size:12.5px;color:#222;line-height:27px;white-space:nowrap;-webkit-text-stroke:0.25px #222">325 mg Oral Q6H</div>
<div class="a" style="left:900px;top:1017px;font-size:12.5px;color:#222;line-height:27px;white-space:nowrap;-webkit-text-stroke:0.25px #222">01/31/19 07:00am (GIVEN)</div>
<div class="a" style="left:367px;top:1042px;width:754px;height:27px;background:#fff;border-bottom:1px solid #d8d8d8"></div>
<div class="a" style="left:396px;top:1044px;font-size:12.5px;color:#222;line-height:27px;white-space:nowrap;-webkit-text-stroke:0.25px #222">Albuterol</div>
<div class="a" style="left:674px;top:1044px;font-size:12.5px;color:#222;line-height:27px;white-space:nowrap;-webkit-text-stroke:0.25px #222">2 puffs MDI q4-6h</div>
<div class="a" style="left:900px;top:1044px;font-size:12.5px;color:#222;line-height:27px;white-space:nowrap;-webkit-text-stroke:0.25px #222">01/31/19 11:00am (GIVEN)</div>
<div class="a" style="left:367px;top:1069px;width:754px;height:27px;background:#eeeeee;border-bottom:1px solid #d8d8d8"></div>
<div class="a" style="left:396px;top:1071px;font-size:12.5px;color:#222;line-height:27px;white-space:nowrap;-webkit-text-stroke:0.25px #222">Furosemide</div>
<div class="a" style="left:674px;top:1071px;font-size:12.5px;color:#222;line-height:27px;white-space:nowrap;-webkit-text-stroke:0.25px #222">20 mg Oral q8h</div>
<div class="a" style="left:900px;top:1071px;font-size:12.5px;color:#222;line-height:27px;white-space:nowrap;-webkit-text-stroke:0.25px #222">01/31/19 11:00am (GIVEN)</div>
<div class="a" style="left:367px;top:1096px;width:754px;height:27px;background:#fff;border-bottom:1px solid #d8d8d8"></div>
<div class="a" style="left:396px;top:1098px;font-size:12.5px;color:#222;line-height:27px;white-space:nowrap;-webkit-text-stroke:0.25px #222">Omeprazole</div>
<div class="a" style="left:674px;top:1098px;font-size:12.5px;color:#222;line-height:27px;white-space:nowrap;-webkit-text-stroke:0.25px #222">40 mg Oral Daily</div>
<div class="a" style="left:900px;top:1098px;font-size:12.5px;color:#222;line-height:27px;white-space:nowrap;-webkit-text-stroke:0.25px #222">01/31/19 07:00am (GIVEN)</div>
<div class="a" style="left:367px;top:1123px;width:754px;height:24px;background:#eeeeee;"></div>
<div class="a" style="left:396px;top:1125px;font-size:12.5px;color:#222;line-height:27px;white-space:nowrap;-webkit-text-stroke:0.25px #222">Simvastatin</div>
<div class="a" style="left:674px;top:1125px;font-size:12.5px;color:#222;line-height:27px;white-space:nowrap;-webkit-text-stroke:0.25px #222">20 mg Oral qPM</div>
<div class="a" style="left:900px;top:1125px;font-size:12.5px;color:#222;line-height:27px;white-space:nowrap;-webkit-text-stroke:0.25px #222">01/30/19 07:00pm (GIVEN)</div>
<div class="a" style="left:668px;top:934px;width:1px;height:212px;background:#d8d8d8;"></div>
<div class="a" style="left:894px;top:934px;width:1px;height:212px;background:#d8d8d8;"></div>
<div class="a pnl" style="left:1138px;top:378px;width:755px;height:69px"></div>
<div class="a" style="left:1154px;top:384px;font-size:13px;font-weight:bold;color:#333;letter-spacing:0.6px;white-space:nowrap">Respiratory Flowsheet</div>
<div class="a" style="left:1742px;top:385px;width:120px;text-align:right;font-size:12px;font-style:italic;color:#aaa;white-space:nowrap">Last 24 Hours</div>
<div class="a" style="left:1154px;top:419px;font-size:12px;color:#999">No results</div>
<div class="a pnl" style="left:1138px;top:452px;width:755px;height:303px"></div>
<div class="a" style="left:1154px;top:458px;font-size:13px;font-weight:bold;color:#333;letter-spacing:0.6px;white-space:nowrap">I/O</div>
<div class="a" style="left:1742px;top:459px;width:120px;text-align:right;font-size:12px;font-style:italic;color:#aaa;white-space:nowrap">Last 24 Hours</div>
<div class="a" style="left:1143px;top:487px;font-size:12px;color:#333;letter-spacing:-0.1px">INTAKE/OUTPUT</div>
<div class="a" style="left:1238.0px;top:492px;width:90px;text-align:center;font-size:12px;font-weight:bold;color:#222;line-height:13.6px;white-space:nowrap;letter-spacing:-0.2px">1/31 7:00-<br>1/31 11:00</div>
<div class="a" style="left:1313.0px;top:485px;width:90px;text-align:center;font-size:12px;font-weight:bold;color:#222;line-height:13.6px;white-space:nowrap;letter-spacing:-0.2px">24hr<br>1/30 7:00-<br>1/31 7:00</div>
<div class="a" style="left:1387.5px;top:492px;width:90px;text-align:center;font-size:12px;font-weight:bold;color:#222;line-height:13.6px;white-space:nowrap;letter-spacing:-0.2px">1/31 3:00-<br>1/31 7:00</div>
<div class="a" style="left:1464.0px;top:492px;width:90px;text-align:center;font-size:12px;font-weight:bold;color:#222;line-height:13.6px;white-space:nowrap;letter-spacing:-0.2px">1/30 11:00-<br>1/31 3:00</div>
<div class="a" style="left:1542.0px;top:492px;width:90px;text-align:center;font-size:12px;font-weight:bold;color:#222;line-height:13.6px;white-space:nowrap;letter-spacing:-0.2px">1/30 7:00-<br>1/30 11:00</div>
<div class="a" style="left:1138px;top:529px;width:486px;height:2px;background:#e2e2e2;"></div>
<div class="a" style="left:1138px;top:531px;width:486px;height:20px;background:#fff;border-bottom:1px solid #e4e4e4"></div>
<div class="a" style="left:1320px;top:531px;width:75px;height:20px;background:#c9dcef;"></div>
<div class="a" style="left:1147px;top:531px;font-size:12.5px;color:#222;line-height:19px;letter-spacing:-0.2px;white-space:nowrap;-webkit-text-stroke:0.45px #222">Net (mL)</div>
<div class="a" style="left:1240px;top:531px;width:70px;text-align:right;font-size:12.5px;color:#555;line-height:19px">418</div>
<div class="a" style="left:1315px;top:531px;width:70px;text-align:right;font-size:12.5px;color:#555;line-height:19px">1,416</div>
<div class="a" style="left:1388px;top:531px;width:70px;text-align:right;font-size:12.5px;color:#555;line-height:19px">91</div>
<div class="a" style="left:1468px;top:531px;width:70px;text-align:right;font-size:12.5px;color:#555;line-height:19px">346</div>
<div class="a" style="left:1544px;top:531px;width:70px;text-align:right;font-size:12.5px;color:#555;line-height:19px">373</div>
<div class="a" style="left:1138px;top:551px;width:486px;height:20px;background:#eeeeee;border-bottom:1px solid #e4e4e4"></div>
<div class="a" style="left:1320px;top:551px;width:75px;height:20px;background:#c9dcef;"></div>
<div class="a" style="left:1147px;top:551px;font-size:12.5px;color:#222;line-height:19px;letter-spacing:-0.2px;white-space:nowrap;-webkit-text-stroke:0.45px #222">Intake (mL)</div>
<div class="a" style="left:1240px;top:551px;width:70px;text-align:right;font-size:12.5px;color:#555;line-height:19px">650</div>
<div class="a" style="left:1315px;top:551px;width:70px;text-align:right;font-size:12.5px;color:#555;line-height:19px">2,455</div>
<div class="a" style="left:1388px;top:551px;width:70px;text-align:right;font-size:12.5px;color:#555;line-height:19px">400</div>
<div class="a" style="left:1468px;top:551px;width:70px;text-align:right;font-size:12.5px;color:#555;line-height:19px">385</div>
<div class="a" style="left:1544px;top:551px;width:70px;text-align:right;font-size:12.5px;color:#555;line-height:19px">585</div>
<div class="a" style="left:1138px;top:571px;width:486px;height:20px;background:#fff;border-bottom:1px solid #e4e4e4"></div>
<div class="a" style="left:1320px;top:571px;width:75px;height:20px;background:#c9dcef;"></div>
<div class="a" style="left:1147px;top:571px;font-size:12.5px;color:#222;line-height:19px;letter-spacing:-0.2px;white-space:nowrap;-webkit-text-stroke:0.45px #222">Output (mL)</div>
<div class="a" style="left:1240px;top:571px;width:70px;text-align:right;font-size:12.5px;color:#555;line-height:19px">232</div>
<div class="a" style="left:1315px;top:571px;width:70px;text-align:right;font-size:12.5px;color:#555;line-height:19px">1,039</div>
<div class="a" style="left:1388px;top:571px;width:70px;text-align:right;font-size:12.5px;color:#555;line-height:19px">309</div>
<div class="a" style="left:1468px;top:571px;width:70px;text-align:right;font-size:12.5px;color:#555;line-height:19px">39</div>
<div class="a" style="left:1544px;top:571px;width:70px;text-align:right;font-size:12.5px;color:#555;line-height:19px">212</div>
<div class="a" style="left:1138px;top:611px;width:486px;height:20px;background:#fff;border-bottom:1px solid #e4e4e4"></div>
<div class="a" style="left:1320px;top:611px;width:75px;height:20px;background:#c9dcef;"></div>
<div class="a" style="left:1147px;top:611px;font-size:12.5px;color:#222;line-height:19px;letter-spacing:-0.2px;white-space:nowrap;-webkit-text-stroke:0.45px #222">IVF (mL)</div>
<div class="a" style="left:1240px;top:611px;width:70px;text-align:right;font-size:12.5px;color:#555;line-height:19px">410</div>
<div class="a" style="left:1315px;top:611px;width:70px;text-align:right;font-size:12.5px;color:#555;line-height:19px">1,960</div>
<div class="a" style="left:1388px;top:611px;width:70px;text-align:right;font-size:12.5px;color:#555;line-height:19px">400</div>
<div class="a" style="left:1468px;top:611px;width:70px;text-align:right;font-size:12.5px;color:#555;line-height:19px">385</div>
<div class="a" style="left:1544px;top:611px;width:70px;text-align:right;font-size:12.5px;color:#555;line-height:19px">405</div>
<div class="a" style="left:1138px;top:631px;width:486px;height:20px;background:#eeeeee;border-bottom:1px solid #e4e4e4"></div>
<div class="a" style="left:1320px;top:631px;width:75px;height:20px;background:#c9dcef;"></div>
<div class="a" style="left:1147px;top:631px;font-size:12.5px;color:#222;line-height:19px;letter-spacing:-0.2px;white-space:nowrap;-webkit-text-stroke:0.45px #222">po (mL)</div>
<div class="a" style="left:1240px;top:631px;width:70px;text-align:right;font-size:12.5px;color:#555;line-height:19px">240</div>
<div class="a" style="left:1315px;top:631px;width:70px;text-align:right;font-size:12.5px;color:#555;line-height:19px">495</div>
<div class="a" style="left:1388px;top:631px;width:70px;text-align:right;font-size:12.5px;color:#555;line-height:19px">0</div>
<div class="a" style="left:1468px;top:631px;width:70px;text-align:right;font-size:12.5px;color:#555;line-height:19px">0</div>
<div class="a" style="left:1544px;top:631px;width:70px;text-align:right;font-size:12.5px;color:#555;line-height:19px">180</div>
<div class="a" style="left:1138px;top:671px;width:486px;height:20px;background:#eeeeee;border-bottom:1px solid #e4e4e4"></div>
<div class="a" style="left:1320px;top:671px;width:75px;height:20px;background:#c9dcef;"></div>
<div class="a" style="left:1147px;top:671px;font-size:12.5px;color:#222;line-height:19px;letter-spacing:-0.2px;white-space:nowrap;-webkit-text-stroke:0.45px #222">CT (mL)</div>
<div class="a" style="left:1240px;top:671px;width:70px;text-align:right;font-size:12.5px;color:#555;line-height:19px">4</div>
<div class="a" style="left:1315px;top:671px;width:70px;text-align:right;font-size:12.5px;color:#555;line-height:19px">18</div>
<div class="a" style="left:1388px;top:671px;width:70px;text-align:right;font-size:12.5px;color:#555;line-height:19px">2</div>
<div class="a" style="left:1468px;top:671px;width:70px;text-align:right;font-size:12.5px;color:#555;line-height:19px">6</div>
<div class="a" style="left:1544px;top:671px;width:70px;text-align:right;font-size:12.5px;color:#555;line-height:19px">2</div>
<div class="a" style="left:1138px;top:691px;width:486px;height:20px;background:#fff;border-bottom:1px solid #e4e4e4"></div>
<div class="a" style="left:1320px;top:691px;width:75px;height:20px;background:#c9dcef;"></div>
<div class="a" style="left:1147px;top:691px;font-size:12.5px;color:#222;line-height:19px;letter-spacing:-0.2px;white-space:nowrap;-webkit-text-stroke:0.45px #222">JP1 (mL)</div>
<div class="a" style="left:1240px;top:691px;width:70px;text-align:right;font-size:12.5px;color:#555;line-height:19px">8</div>
<div class="a" style="left:1315px;top:691px;width:70px;text-align:right;font-size:12.5px;color:#555;line-height:19px">16</div>
<div class="a" style="left:1388px;top:691px;width:70px;text-align:right;font-size:12.5px;color:#555;line-height:19px">7</div>
<div class="a" style="left:1468px;top:691px;width:70px;text-align:right;font-size:12.5px;color:#555;line-height:19px">3</div>
<div class="a" style="left:1544px;top:691px;width:70px;text-align:right;font-size:12.5px;color:#555;line-height:19px">5</div>
<div class="a" style="left:1138px;top:711px;width:486px;height:20px;background:#eeeeee;border-bottom:1px solid #e4e4e4"></div>
<div class="a" style="left:1320px;top:711px;width:75px;height:20px;background:#c9dcef;"></div>
<div class="a" style="left:1147px;top:711px;font-size:12.5px;color:#222;line-height:19px;letter-spacing:-0.2px;white-space:nowrap;-webkit-text-stroke:0.45px #222">NG (mL)</div>
<div class="a" style="left:1240px;top:711px;width:70px;text-align:right;font-size:12.5px;color:#555;line-height:19px">10</div>
<div class="a" style="left:1315px;top:711px;width:70px;text-align:right;font-size:12.5px;color:#555;line-height:19px">105</div>
<div class="a" style="left:1388px;top:711px;width:70px;text-align:right;font-size:12.5px;color:#555;line-height:19px">0</div>
<div class="a" style="left:1468px;top:711px;width:70px;text-align:right;font-size:12.5px;color:#555;line-height:19px">30</div>
<div class="a" style="left:1544px;top:711px;width:70px;text-align:right;font-size:12.5px;color:#555;line-height:19px">15</div>
<div class="a" style="left:1138px;top:731px;width:486px;height:20px;background:#fff;border-bottom:1px solid #e4e4e4"></div>
<div class="a" style="left:1320px;top:731px;width:75px;height:20px;background:#c9dcef;"></div>
<div class="a" style="left:1147px;top:731px;font-size:12.5px;color:#222;line-height:19px;letter-spacing:-0.2px;white-space:nowrap;-webkit-text-stroke:0.45px #222">Urine (mL)</div>
<div class="a" style="left:1240px;top:731px;width:70px;text-align:right;font-size:12.5px;color:#555;line-height:19px">210</div>
<div class="a" style="left:1315px;top:731px;width:70px;text-align:right;font-size:12.5px;color:#555;line-height:19px">900</div>
<div class="a" style="left:1388px;top:731px;width:70px;text-align:right;font-size:12.5px;color:#555;line-height:19px">300</div>
<div class="a" style="left:1468px;top:731px;width:70px;text-align:right;font-size:12.5px;color:#555;line-height:19px"></div>
<div class="a" style="left:1544px;top:731px;width:70px;text-align:right;font-size:12.5px;color:#555;line-height:19px"></div>
<div class="a" style="left:1244px;top:531px;width:1px;height:220px;background:#e0e0e0;"></div>
<div class="a" style="left:1468px;top:531px;width:1px;height:220px;background:#e0e0e0;"></div>
<div class="a" style="left:1548px;top:531px;width:1px;height:220px;background:#e0e0e0;"></div>
<div class="a" style="left:1138px;top:591px;width:486px;height:20px;background:#3d444b;"></div>
<div class="a" style="left:1244px;top:591px;width:2px;height:20px;background:#fff;"></div>
<div class="a" style="left:1147px;top:591px;font-size:12px;font-weight:bold;color:#fff;line-height:19px;letter-spacing:-0.3px">Inputs</div>
<div class="a" style="left:1138px;top:651px;width:486px;height:20px;background:#3d444b;"></div>
<div class="a" style="left:1244px;top:651px;width:2px;height:20px;background:#fff;"></div>
<div class="a" style="left:1147px;top:651px;font-size:12px;font-weight:bold;color:#fff;line-height:19px;letter-spacing:-0.3px">Outputs</div>
<div class="a" style="left:1469px;top:731px;width:155px;height:21px;background:#fff"></div>
<div class="a" style="left:1541px;top:735px;font-size:12px;font-style:italic;color:#333;text-decoration:underline;white-space:nowrap;letter-spacing:-0.3px">Show more &raquo;</div>
<div class="a pnl" style="left:1138px;top:760px;width:755px;height:384px"></div>
<div class="a" style="left:1154px;top:766px;font-size:13px;font-weight:bold;color:#333;letter-spacing:0.6px;white-space:nowrap">Lab Results</div>
<div class="a" style="left:1742px;top:767px;width:120px;text-align:right;font-size:12px;font-style:italic;color:#aaa;white-space:nowrap">Last 72 Hours</div>
<svg class="a" style="left:1867px;top:765px" width="22" height="22"><circle cx="11" cy="11" r="10" fill="#333"/><path d="M11 5V17M5 11H17" stroke="#fff" stroke-width="3.4"/></svg>
<div class="a" style="left:1223.5px;top:791px;width:70px;text-align:center;font-size:12px;color:#222;line-height:17.8px;white-space:nowrap">01/31/19<br>06:30am</div>
<div class="a" style="left:1290.0px;top:791px;width:70px;text-align:center;font-size:12px;color:#222;line-height:17.8px;white-space:nowrap">01/30/19<br>09:30am</div>
<div class="a" style="left:1356.0px;top:791px;width:70px;text-align:center;font-size:12px;color:#222;line-height:17.8px;white-space:nowrap">01/29/19<br>09:45am</div>
<div class="a" style="left:1138px;top:827px;width:286px;height:1px;background:#e0e0e0;"></div>
<div class="a" style="left:1138px;top:828px;width:286px;height:309px;overflow:hidden">
<div class="a" style="left:0;top:0px;width:286px;height:22px;background:#fff;border-bottom:1px solid #e4e4e4"></div>
<div class="a" style="left:29px;top:1px;font-size:12.5px;color:#222;line-height:22px">Glu</div>
<div class="a" style="left:87px;top:0.5px;width:55px;text-align:right;font-size:12.5px;color:#555;line-height:22px">96</div>
<div class="a" style="left:153px;top:0.5px;width:55px;text-align:right;font-size:12.5px;color:#555;line-height:22px">88</div>
<div class="a" style="left:219px;top:0.5px;width:56px;text-align:right;font-size:12.5px;color:#555;line-height:22px">105</div>
<div class="a" style="left:0;top:22px;width:286px;height:22px;background:#eeeeee;border-bottom:1px solid #e4e4e4"></div>
<div class="a" style="left:29px;top:23px;font-size:12.5px;color:#222;line-height:22px">K</div>
<div class="a" style="left:87px;top:22px;width:66px;height:22px;background:#f00;border-right:1px solid #fff"></div>
<div class="a" style="left:87px;top:22.5px;width:55px;text-align:right;font-size:12.5px;color:#8a0000;line-height:22px">5.8*</div>
<div class="a" style="left:153px;top:22px;width:66px;height:22px;background:#ff0"></div>
<div class="a" style="left:153px;top:22.5px;width:55px;text-align:right;font-size:12.5px;color:#555500;line-height:22px">5.6</div>
<div class="a" style="left:219px;top:22px;width:67px;height:22px;background:#ff0"></div>
<div class="a" style="left:219px;top:22.5px;width:56px;text-align:right;font-size:12.5px;color:#555500;line-height:22px">5.5</div>
<div class="a" style="left:0;top:44px;width:286px;height:22px;background:#fff;border-bottom:1px solid #e4e4e4"></div>
<div class="a" style="left:29px;top:45px;font-size:12.5px;color:#222;line-height:22px">Na</div>
<div class="a" style="left:87px;top:44px;width:66px;height:22px;background:#ff0"></div>
<div class="a" style="left:87px;top:44.5px;width:55px;text-align:right;font-size:12.5px;color:#555500;line-height:22px">151</div>
<div class="a" style="left:153px;top:44.5px;width:55px;text-align:right;font-size:12.5px;color:#555;line-height:22px">144</div>
<div class="a" style="left:219px;top:44.5px;width:56px;text-align:right;font-size:12.5px;color:#555;line-height:22px">139</div>
<div class="a" style="left:0;top:66px;width:286px;height:22px;background:#eeeeee;border-bottom:1px solid #e4e4e4"></div>
<div class="a" style="left:29px;top:67px;font-size:12.5px;color:#222;line-height:22px">Cl</div>
<div class="a" style="left:87px;top:66.5px;width:55px;text-align:right;font-size:12.5px;color:#555;line-height:22px">104</div>
<div class="a" style="left:153px;top:66.5px;width:55px;text-align:right;font-size:12.5px;color:#555;line-height:22px">104</div>
<div class="a" style="left:219px;top:66.5px;width:56px;text-align:right;font-size:12.5px;color:#555;line-height:22px">102</div>
<div class="a" style="left:0;top:88px;width:286px;height:22px;background:#fff;border-bottom:1px solid #e4e4e4"></div>
<div class="a" style="left:29px;top:89px;font-size:12.5px;color:#222;line-height:22px">BUN</div>
<div class="a" style="left:87px;top:88px;width:66px;height:22px;background:#f00;border-right:1px solid #fff"></div>
<div class="a" style="left:87px;top:88.5px;width:55px;text-align:right;font-size:12.5px;color:#8a0000;line-height:22px">32</div>
<div class="a" style="left:153px;top:88px;width:66px;height:22px;background:#f00;border-right:1px solid #fff"></div>
<div class="a" style="left:153px;top:88.5px;width:55px;text-align:right;font-size:12.5px;color:#8a0000;line-height:22px">28</div>
<div class="a" style="left:219px;top:88px;width:67px;height:22px;background:#f00;border-right:1px solid #fff"></div>
<div class="a" style="left:219px;top:88.5px;width:56px;text-align:right;font-size:12.5px;color:#8a0000;line-height:22px">25</div>
<div class="a" style="left:0;top:110px;width:286px;height:22px;background:#eeeeee;border-bottom:1px solid #e4e4e4"></div>
<div class="a" style="left:29px;top:111px;font-size:12.5px;color:#222;line-height:22px">HCO3</div>
<div class="a" style="left:87px;top:110px;width:66px;height:22px;background:#ff0"></div>
<div class="a" style="left:87px;top:110.5px;width:55px;text-align:right;font-size:12.5px;color:#555500;line-height:22px">16</div>
<div class="a" style="left:153px;top:110px;width:66px;height:22px;background:#ff0"></div>
<div class="a" style="left:153px;top:110.5px;width:55px;text-align:right;font-size:12.5px;color:#555500;line-height:22px">17</div>
<div class="a" style="left:219px;top:110px;width:67px;height:22px;background:#ff0"></div>
<div class="a" style="left:219px;top:110.5px;width:56px;text-align:right;font-size:12.5px;color:#555500;line-height:22px">18</div>
<div class="a" style="left:0;top:132px;width:286px;height:22px;background:#fff;border-bottom:1px solid #e4e4e4"></div>
<div class="a" style="left:29px;top:133px;font-size:12.5px;color:#222;line-height:22px">Cr</div>
<div class="a" style="left:87px;top:132px;width:66px;height:22px;background:#f00;border-right:1px solid #fff"></div>
<div class="a" style="left:87px;top:132.5px;width:55px;text-align:right;font-size:12.5px;color:#8a0000;line-height:22px">2.2</div>
<div class="a" style="left:153px;top:132px;width:66px;height:22px;background:#f00;border-right:1px solid #fff"></div>
<div class="a" style="left:153px;top:132.5px;width:55px;text-align:right;font-size:12.5px;color:#8a0000;line-height:22px">2.1</div>
<div class="a" style="left:219px;top:132px;width:67px;height:22px;background:#ff0"></div>
<div class="a" style="left:219px;top:132.5px;width:56px;text-align:right;font-size:12.5px;color:#555500;line-height:22px">1.6</div>
<div class="a" style="left:0;top:154px;width:286px;height:22px;background:#eeeeee;border-bottom:1px solid #e4e4e4"></div>
<div class="a" style="left:29px;top:155px;font-size:12.5px;color:#222;line-height:22px">Hb</div>
<div class="a" style="left:87px;top:154.5px;width:55px;text-align:right;font-size:12.5px;color:#555;line-height:22px">12.4</div>
<div class="a" style="left:153px;top:154.5px;width:55px;text-align:right;font-size:12.5px;color:#555;line-height:22px">12.3</div>
<div class="a" style="left:219px;top:154.5px;width:56px;text-align:right;font-size:12.5px;color:#555;line-height:22px">12.1</div>
<div class="a" style="left:0;top:176px;width:286px;height:22px;background:#fff;border-bottom:1px solid #e4e4e4"></div>
<div class="a" style="left:29px;top:177px;font-size:12.5px;color:#222;line-height:22px">Eos</div>
<div class="a" style="left:87px;top:176.5px;width:55px;text-align:right;font-size:12.5px;color:#555;line-height:22px">2</div>
<div class="a" style="left:153px;top:176.5px;width:55px;text-align:right;font-size:12.5px;color:#555;line-height:22px">3</div>
<div class="a" style="left:219px;top:176.5px;width:56px;text-align:right;font-size:12.5px;color:#555;line-height:22px">1</div>
<div class="a" style="left:0;top:198px;width:286px;height:22px;background:#eeeeee;border-bottom:1px solid #e4e4e4"></div>
<div class="a" style="left:29px;top:199px;font-size:12.5px;color:#222;line-height:22px">Monos</div>
<div class="a" style="left:87px;top:198.5px;width:55px;text-align:right;font-size:12.5px;color:#555;line-height:22px">2</div>
<div class="a" style="left:153px;top:198.5px;width:55px;text-align:right;font-size:12.5px;color:#555;line-height:22px">6</div>
<div class="a" style="left:219px;top:198.5px;width:56px;text-align:right;font-size:12.5px;color:#555;line-height:22px">5</div>
<div class="a" style="left:0;top:220px;width:286px;height:22px;background:#fff;border-bottom:1px solid #e4e4e4"></div>
<div class="a" style="left:29px;top:221px;font-size:12.5px;color:#222;line-height:22px">Basos</div>
<div class="a" style="left:87px;top:220.5px;width:55px;text-align:right;font-size:12.5px;color:#555;line-height:22px">2</div>
<div class="a" style="left:153px;top:220.5px;width:55px;text-align:right;font-size:12.5px;color:#555;line-height:22px">2</div>
<div class="a" style="left:219px;top:220.5px;width:56px;text-align:right;font-size:12.5px;color:#555;line-height:22px">2</div>
<div class="a" style="left:0;top:242px;width:286px;height:22px;background:#eeeeee;border-bottom:1px solid #e4e4e4"></div>
<div class="a" style="left:29px;top:243px;font-size:12.5px;color:#222;line-height:22px">Segs</div>
<div class="a" style="left:87px;top:242px;width:66px;height:22px;background:#ff0"></div>
<div class="a" style="left:87px;top:242.5px;width:55px;text-align:right;font-size:12.5px;color:#555500;line-height:22px">65</div>
<div class="a" style="left:153px;top:242px;width:66px;height:22px;background:#ff0"></div>
<div class="a" style="left:153px;top:242.5px;width:55px;text-align:right;font-size:12.5px;color:#555500;line-height:22px">66</div>
<div class="a" style="left:219px;top:242.5px;width:56px;text-align:right;font-size:12.5px;color:#555;line-height:22px">61</div>
<div class="a" style="left:0;top:264px;width:286px;height:22px;background:#fff;border-bottom:1px solid #e4e4e4"></div>
<div class="a" style="left:29px;top:265px;font-size:12.5px;color:#222;line-height:22px">Lymphs</div>
<div class="a" style="left:87px;top:264.5px;width:55px;text-align:right;font-size:12.5px;color:#555;line-height:22px">24</div>
<div class="a" style="left:153px;top:264.5px;width:55px;text-align:right;font-size:12.5px;color:#555;line-height:22px">32</div>
<div class="a" style="left:219px;top:264.5px;width:56px;text-align:right;font-size:12.5px;color:#555;line-height:22px">31</div>
<div class="a" style="left:0;top:286px;width:286px;height:22px;background:#eeeeee;border-bottom:1px solid #e4e4e4"></div>
<div class="a" style="left:29px;top:287px;font-size:12.5px;color:#222;line-height:22px">RDW</div>
<div class="a" style="left:87px;top:286.5px;width:55px;text-align:right;font-size:12.5px;color:#555;line-height:22px">13.4</div>
<div class="a" style="left:153px;top:286.5px;width:55px;text-align:right;font-size:12.5px;color:#555;line-height:22px">13.1</div>
<div class="a" style="left:219px;top:286.5px;width:56px;text-align:right;font-size:12.5px;color:#555;line-height:22px">14.2</div>
<div class="a" style="left:87px;top:0;width:1px;height:309px;background:#e0e0e0"></div>
<div class="a" style="left:153px;top:0;width:1px;height:309px;background:#e0e0e0"></div>
<div class="a" style="left:219px;top:0;width:1px;height:309px;background:#e0e0e0"></div>
</div>
<div class="a" style="left:1425px;top:828px;width:8px;height:138px;background:#8a8a8a;"></div>
<div class="a" style="left:1430px;top:966px;width:2px;height:171px;background:#8a8a8a;"></div>
<div class="a" style="left:1326px;top:1125px;width:98px;height:16px;background:#fff"></div>
<div class="a" style="left:1340px;top:1126px;font-size:12px;font-style:italic;color:#333;text-decoration:underline;white-space:nowrap;letter-spacing:-0.3px">Show more &raquo;</div>
<div class="a" style="left:1620px;top:1148px;width:300px;height:21px;background:#c6d9ea;border-left:1px solid #aab"></div>
<div class="a" style="left:1626px;top:1152px;font-size:12.5px;font-weight:bold;color:#6e7a84">Online</div>
<svg class="a" style="left:1872px;top:1150px" width="18" height="18" viewBox="0 0 18 18"><g transform="translate(9 9)" fill="#9aa4ac"><circle r="5.5"/><rect x="-1.6" y="-8" width="3.2" height="16"/><rect x="-1.6" y="-8" width="3.2" height="16" transform="rotate(45)"/><rect x="-1.6" y="-8" width="3.2" height="16" transform="rotate(90)"/><rect x="-1.6" y="-8" width="3.2" height="16" transform="rotate(135)"/></g><circle cx="9" cy="9" r="2.3" fill="#c6d9ea"/></svg>
<svg class="a" style="left:1897px;top:1150px" width="18" height="18"><circle cx="9" cy="9" r="8" fill="#dfe07a"/><path d="M9 3.5V9M5.5 6A4.7 4.7 0 1 0 12.5 6" fill="none" stroke="#f4f0c0" stroke-width="1.8"/></svg>
<div class="a" style="left:688px;top:1066px;font-size:58px;font-weight:bold;color:rgba(120,120,120,0.13);white-space:nowrap;letter-spacing:0.3px;pointer-events:none">SoftwareSuggest<span style="font-size:30px">.com</span></div>
<div class="a" style="left:0;top:1168px;width:349px;height:2px;background:#c8c8c8"></div>
<div class="a" style="left:0;top:1170px;width:1920px;height:30px;background:#0e0e0e"></div>
<svg class="a" style="left:10px;top:1177px" width="17" height="17"><path d="M0 2.5L7 1.5V8H0Z M8 1.3L17 0V8H8Z M0 9H7V15.5L0 14.5Z M8 9H17V17L8 15.7Z" fill="#fff"/></svg>
<svg class="a" style="left:43px;top:1177px" width="22" height="16"><rect x="4.5" y="1" width="13" height="14" fill="none" stroke="#fff" stroke-width="1.4"/><path d="M2 3V13M20 3V13" stroke="#fff" stroke-width="1.4"/></svg>
<svg class="a" style="left:84px;top:1177px" width="18" height="16"><path d="M0 2H7L9 4H18V16H0Z" fill="#f3d27a"/><rect x="0" y="6" width="18" height="10" fill="#f8dd8a"/><rect x="5" y="9" width="8" height="5" fill="#4aa3c8"/></svg>
<svg class="a" style="left:122px;top:1175px" width="17" height="19"><rect x="1" y="2" width="15" height="17" fill="#a8c8e8"/><path d="M3 1V4M6 1V4M9 1V4M12 1V4" stroke="#ddd" stroke-width="1"/><path d="M3 8H14M3 11H14M3 14H14" stroke="#6890b8" stroke-width="0.8"/></svg>
<svg class="a" style="left:158px;top:1176px" width="19" height="18"><rect x="7" y="2" width="12" height="14" fill="#3a86c8"/><rect x="0" y="0" width="11" height="18" fill="#0f5fa8"/><text x="5.5" y="13.5" font-size="11" font-weight="bold" fill="#fff" text-anchor="middle" font-family="Liberation Sans">O</text></svg>
<div class="a" style="left:186px;top:1170px;width:36px;height:30px;background:#333"></div>
<svg class="a" style="left:195px;top:1176px" width="18" height="18"><circle cx="9" cy="9" r="8.5" fill="#db4437"/><path d="M9 9L1.6 13.2A8.5 8.5 0 0 0 13.5 16.4Z" fill="#0f9d58"/><path d="M9 9L13.5 16.4A8.5 8.5 0 0 0 16.5 4.7Z" fill="#ffcd40"/><circle cx="9" cy="9" r="4" fill="#fff"/><circle cx="9" cy="9" r="3" fill="#4285f4"/></svg>
<svg class="a" style="left:234px;top:1175px" width="14" height="19"><rect x="0" y="0" width="14" height="19" fill="#fff"/><rect x="2" y="2" width="10" height="3" fill="#222"/><g fill="#222"><rect x="2" y="7" width="2" height="2"/><rect x="6" y="7" width="2" height="2"/><rect x="10" y="7" width="2" height="2"/><rect x="2" y="11" width="2" height="2"/><rect x="6" y="11" width="2" height="2"/><rect x="10" y="11" width="2" height="2"/><rect x="2" y="15" width="2" height="2"/><rect x="6" y="15" width="2" height="2"/><rect x="10" y="15" width="2" height="2"/></g></svg>
<svg class="a" style="left:269px;top:1176px" width="18" height="18"><rect x="0.5" y="3" width="17" height="14.5" fill="#e8d8d0" stroke="#c83030" stroke-width="1.5"/><path d="M3 7L9 1L15 7" fill="none" stroke="#c83030" stroke-width="1.5"/><rect x="5" y="9" width="8" height="6" fill="#555"/></svg>
<svg class="a" style="left:306px;top:1176px" width="19" height="18"><rect x="7" y="2" width="12" height="14" fill="#5cb85c"/><path d="M10 5H17M10 8H17M10 11H17" stroke="#fff" stroke-width="1"/><rect x="0" y="0" width="11" height="18" fill="#1d6f42"/><text x="5.5" y="13.5" font-size="11" font-weight="bold" fill="#fff" text-anchor="middle" font-family="Liberation Sans">X</text></svg>
<svg class="a" style="left:343px;top:1176px" width="19" height="18"><rect x="7" y="2" width="12" height="14" fill="#5a8ad8"/><path d="M10 5H17M10 8H17M10 11H17" stroke="#fff" stroke-width="1"/><rect x="0" y="0" width="11" height="18" fill="#2b579a"/><text x="5.5" y="13.5" font-size="10" font-weight="bold" fill="#fff" text-anchor="middle" font-family="Liberation Sans">W</text></svg>
<svg class="a" style="left:379px;top:1175px" width="18" height="20"><path d="M2 18V9A7 7 0 0 1 16 9V18L13 16L10 18L7 16L4 18Z" fill="#9a7ab8"/><circle cx="7" cy="9" r="2.2" fill="#fff"/><circle cx="12" cy="9" r="2.2" fill="#fff"/><path d="M6 14H12" stroke="#d33" stroke-width="1.5"/></svg>
<svg class="a" style="left:416px;top:1176px" width="18" height="18"><rect x="1" y="3" width="15" height="14" fill="none" stroke="#e05a2a" stroke-width="2"/><path d="M9 3L13 0L17 3L13 12" fill="none" stroke="#e05a2a" stroke-width="1.6"/></svg>
<svg class="a" style="left:453px;top:1176px" width="19" height="18"><rect x="7" y="2" width="12" height="14" fill="#e88060"/><path d="M10 5H17M10 8H17M10 11H17" stroke="#fff" stroke-width="1"/><rect x="0" y="0" width="11" height="18" fill="#c43e1c"/><text x="5.5" y="13.5" font-size="11" font-weight="bold" fill="#fff" text-anchor="middle" font-family="Liberation Sans">P</text></svg>
<svg class="a" style="left:490px;top:1175px" width="19" height="19"><circle cx="9.5" cy="9.5" r="8" fill="#e8a840"/><circle cx="9.5" cy="9.5" r="4.5" fill="#fff"/><path d="M3 6L16 13M4 14L15 5" stroke="#c03030" stroke-width="2"/></svg>
<div class="a" style="left:116px;top:1198px;width:28px;height:2px;background:#8ab4e0"></div>
<div class="a" style="left:153px;top:1198px;width:27px;height:2px;background:#8ab4e0"></div>
<div class="a" style="left:186px;top:1198px;width:36px;height:2px;background:#8ab4e0"></div>
<div class="a" style="left:301px;top:1198px;width:28px;height:2px;background:#8ab4e0"></div>
<div class="a" style="left:338px;top:1198px;width:28px;height:2px;background:#8ab4e0"></div>
<div class="a" style="left:375px;top:1198px;width:27px;height:2px;background:#8ab4e0"></div>
<div class="a" style="left:412px;top:1198px;width:28px;height:2px;background:#8ab4e0"></div>
<div class="a" style="left:449px;top:1198px;width:28px;height:2px;background:#8ab4e0"></div>
<div class="a" style="left:486px;top:1198px;width:28px;height:2px;background:#8ab4e0"></div>
<svg class="a" style="left:1690px;top:1179px" width="14" height="9"><path d="M1 8L7 2L13 8" fill="none" stroke="#fff" stroke-width="1.3"/></svg>
<svg class="a" style="left:1714px;top:1176px" width="16" height="17"><path d="M0 0H11V8H6L3 11V8H0Z" fill="#ddd"/><circle cx="11" cy="11" r="5" fill="#6c6"/></svg>
<svg class="a" style="left:1737px;top:1178px" width="18" height="14"><path d="M2 0V4M5 0V4M1 4H6V6L3.5 8V13" fill="none" stroke="#fff" stroke-width="1.2"/><rect x="6" y="4" width="11" height="7" fill="none" stroke="#fff" stroke-width="1.2"/><rect x="8" y="6" width="7" height="3" fill="#fff"/></svg>
<svg class="a" style="left:1762px;top:1178px" width="17" height="15"><rect x="0.6" y="0.6" width="4" height="3.5" fill="none" stroke="#fff" stroke-width="1.1"/><rect x="3.6" y="2.6" width="13" height="8" fill="none" stroke="#fff" stroke-width="1.1"/><path d="M10 11V14M6 14H14M2.6 4V14" stroke="#fff" stroke-width="1.1"/></svg>
<svg class="a" style="left:1786px;top:1178px" width="16" height="14"><path d="M1 4.5H4L8 1V13L4 9.5H1Z" fill="none" stroke="#fff" stroke-width="1.1"/><path d="M10 5L14 9M14 5L10 9" stroke="#fff" stroke-width="1.2"/></svg>
<div class="a" style="left:1812px;top:1177px;font-size:12px;color:#fff;white-space:nowrap">11:11 AM</div>
<svg class="a" style="left:1879px;top:1176px" width="17" height="18"><path d="M0 0H17V13H10L8.5 16L7 13H0Z" fill="#fff"/><path d="M3 4H14M3 7H14M3 10H10" stroke="#111" stroke-width="1.2"/></svg>
<div class="a" style="left:1915px;top:1170px;width:1px;height:30px;background:#666"></div>
<!--/PANELS-->

</body></html>
